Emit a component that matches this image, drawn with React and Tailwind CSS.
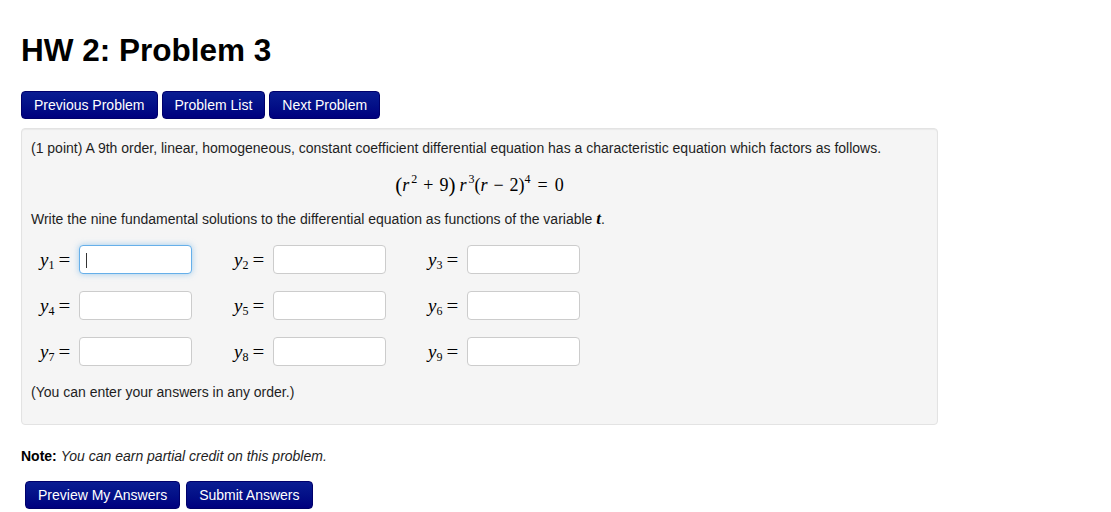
const navBtn =
  'h-[28px] px-[12px] rounded-[4px] border border-[#00006b] bg-gradient-to-b from-[#0a1c92] to-[#00007e] text-white text-[14px] leading-none'

function MathVar({ name, sub }) {
  return (
    <span className="flex items-baseline font-['Liberation_Serif',serif] text-black whitespace-nowrap">
      <i className="text-[19px]">{name}</i>
      <sub className="text-[12px] not-italic">{sub}</sub>
      <span className="ml-[5px] text-[19px] inline-block scale-x-110">=</span>
    </span>
  )
}

function AnswerCell({ n, focused }) {
  return (
    <div className="flex items-center">
      <div className="w-[40px] pl-[1px]">
        <MathVar name="y" sub={n} />
      </div>
      <div className="relative">
        <input
          type="text"
          readOnly
          className={
            focused
              ? 'block w-[113px] h-[29px] rounded-[4px] bg-white border border-[#66afe9] shadow-[0_0_6px_rgba(102,175,233,0.6)] outline-none'
              : 'block w-[113px] h-[29px] rounded-[4px] bg-white border border-[#cccccc] outline-none'
          }
        />
        {focused && <span className="absolute left-[7px] top-[8px] h-[15px] w-px bg-[#333]" />}
      </div>
    </div>
  )
}

export default function App() {
  return (
    <div className="min-h-screen bg-white pl-[21px] pt-[33px] font-['Liberation_Sans',Arial,sans-serif] text-[#1e1e1e]">
      <h1 className="text-[31.5px] leading-[34px] font-bold text-black">HW 2: Problem 3</h1>

      <div className="mt-[24px] flex gap-[4px]">
        <button className={navBtn}>Previous Problem</button>
        <button className={navBtn}>Problem List</button>
        <button className={navBtn}>Next Problem</button>
      </div>

      <div className="mt-[9px] w-[917px] rounded-[4px] border border-[#e3e3e3] bg-[#f5f5f5] shadow-[inset_0_1px_1px_rgba(0,0,0,0.05)] px-[9px] pt-[9px] pb-[22px] text-[14px] leading-[20px]">
        <p>
          (1 point) A 9th order, linear, homogeneous, constant coefficient differential equation has a
          characteristic equation which factors as follows.
        </p>

        <div className="mt-[12px] h-[30px] flex items-center justify-center font-['Liberation_Serif',serif] text-[18px] text-black">
          <span className="text-[21px]">(</span>
          <i>r</i>
          <sup className="ml-[2px] text-[12px]">2</sup>
          <span className="mx-[6px]">+</span>
          <span>9</span>
          <span className="text-[21px]">)</span>
          <i className="ml-[4px]">r</i>
          <sup className="ml-[2px] text-[12px]">3</sup>
          <span>(</span>
          <i>r</i>
          <span className="mx-[6px]">−</span>
          <span>2</span>
          <span>)</span>
          <sup className="text-[12px]">4</sup>
          <span className="mx-[7px]">=</span>
          <span>0</span>
        </div>

        <p className="mt-[9px]">
          Write the nine fundamental solutions to the differential equation as functions of the variable{' '}
          <i className="font-['Liberation_Serif',serif] text-[17px] font-bold text-black">t</i>.
        </p>

        <div className="mt-[16px] ml-[8px] grid grid-cols-[repeat(3,153px)] gap-x-[41px] gap-y-[17px]">
          <AnswerCell n="1" focused />
          <AnswerCell n="2" />
          <AnswerCell n="3" />
          <AnswerCell n="4" />
          <AnswerCell n="5" />
          <AnswerCell n="6" />
          <AnswerCell n="7" />
          <AnswerCell n="8" />
          <AnswerCell n="9" />
        </div>

        <p className="mt-[16px]">(You can enter your answers in any order.)</p>
      </div>

      <p className="mt-[21px] text-[14px] leading-[20px]">
        <b className="text-black">Note:</b> <i>You can earn partial credit on this problem.</i>
      </p>

      <div className="mt-[15px] ml-[4px] flex gap-[6px] pb-[3px]">
        <button className={navBtn}>Preview My Answers</button>
        <button className={navBtn}>Submit Answers</button>
      </div>
    </div>
  )
}
